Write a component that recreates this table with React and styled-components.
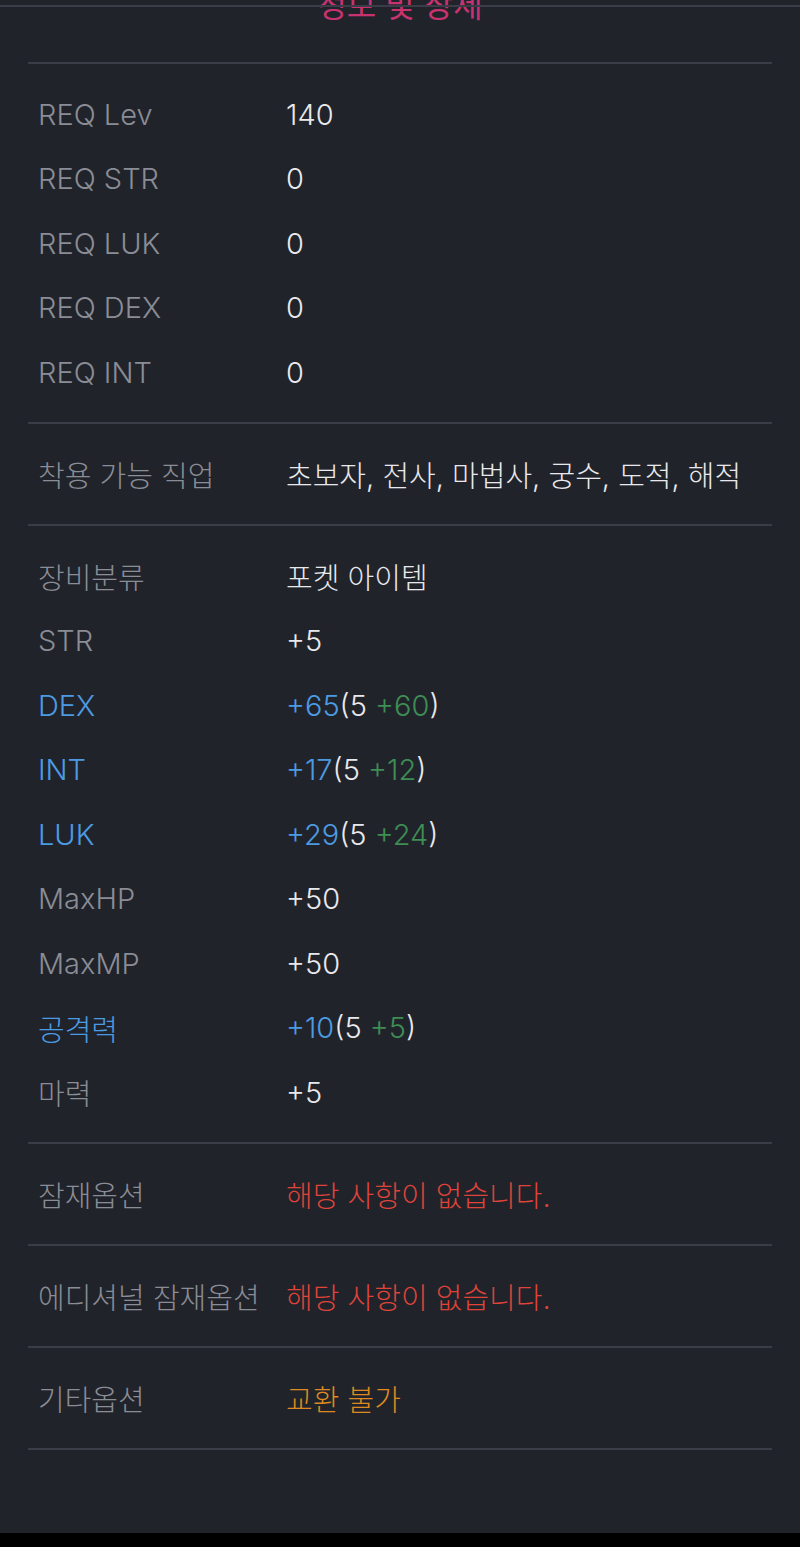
import React from "react";
import styled, { createGlobalStyle } from "styled-components";

const Global = createGlobalStyle`
  html, body { margin: 0; padding: 0; background: #000; }
  body {
    font-family: Inter, "Noto Sans CJK KR", "Noto Sans", sans-serif;
    -webkit-font-smoothing: antialiased;
  }
`;

const C = {
  bg: "#21232b",
  line: "#3a3d48",
  label: "#8a8d95",
  value: "#e9e9ec",
  blue: "#4c9be2",
  green: "#3e8d54",
  red: "#df4339",
  orange: "#df8a21",
  pink: "#c8336f",
};

const Page = styled.div`
  position: relative;
  width: 800px;
  height: 1547px;
  box-sizing: border-box;
  background: ${C.bg};
  border-bottom: 14px solid #000;
  overflow: hidden;
`;

const TopLine = styled.div`
  position: absolute;
  left: 0;
  right: 0;
  top: 5px;
  height: 2px;
  background: ${C.line};
`;

const TitleBar = styled.div`
  height: 62px;
  display: flex;
  justify-content: center;
  align-items: flex-start;
`;

const Title = styled.div`
  margin-top: -13px;
  font-size: 32px;
  line-height: 38px;
  font-weight: 400;
  color: ${C.pink};
`;

const Content = styled.div`
  margin: 0 28px;
`;

const Section = styled.section`
  border-top: 2px solid ${C.line};
  padding: 17.75px 0;
  &:last-child {
    border-bottom: 2px solid ${C.line};
  }
`;

const Row = styled.div`
  display: grid;
  grid-template-columns: 248px 1fr;
  align-items: center;
  height: 64.5px;
  padding-left: 10px;
  font-size: 29px;
  font-weight: 300;
  white-space: nowrap;
`;

const Label = styled.div`
  color: ${(p) => (p.$blue ? C.blue : C.label)};
`;

const Value = styled.div`
  color: ${(p) => C[p.$tone || "value"]};
`;

const Tone = styled.span`
  color: ${(p) => C[p.$tone]};
`;

const Boosted = ({ total, base, extra }) => (
  <>
    <Tone $tone="blue">+{total}</Tone>({base} <Tone $tone="green">+{extra}</Tone>)
  </>
);

export default function App() {
  return (
    <>
      <Global />
      <Page>
        <TitleBar>
          <Title>정보 및 상세</Title>
        </TitleBar>
        <TopLine />
        <Content>
          <Section>
            <Row><Label>REQ Lev</Label><Value>140</Value></Row>
            <Row><Label>REQ STR</Label><Value>0</Value></Row>
            <Row><Label>REQ LUK</Label><Value>0</Value></Row>
            <Row><Label>REQ DEX</Label><Value>0</Value></Row>
            <Row><Label>REQ INT</Label><Value>0</Value></Row>
          </Section>
          <Section>
            <Row>
              <Label>착용 가능 직업</Label>
              <Value>초보자, 전사, 마법사, 궁수, 도적, 해적</Value>
            </Row>
          </Section>
          <Section>
            <Row><Label>장비분류</Label><Value>포켓 아이템</Value></Row>
            <Row><Label>STR</Label><Value>+5</Value></Row>
            <Row><Label $blue>DEX</Label><Value><Boosted total={65} base={5} extra={60} /></Value></Row>
            <Row><Label $blue>INT</Label><Value><Boosted total={17} base={5} extra={12} /></Value></Row>
            <Row><Label $blue>LUK</Label><Value><Boosted total={29} base={5} extra={24} /></Value></Row>
            <Row><Label>MaxHP</Label><Value>+50</Value></Row>
            <Row><Label>MaxMP</Label><Value>+50</Value></Row>
            <Row><Label $blue>공격력</Label><Value><Boosted total={10} base={5} extra={5} /></Value></Row>
            <Row><Label>마력</Label><Value>+5</Value></Row>
          </Section>
          <Section>
            <Row><Label>잠재옵션</Label><Value $tone="red">해당 사항이 없습니다.</Value></Row>
          </Section>
          <Section>
            <Row><Label>에디셔널 잠재옵션</Label><Value $tone="red">해당 사항이 없습니다.</Value></Row>
          </Section>
          <Section>
            <Row><Label>기타옵션</Label><Value $tone="orange">교환 불가</Value></Row>
          </Section>
        </Content>
      </Page>
    </>
  );
}
